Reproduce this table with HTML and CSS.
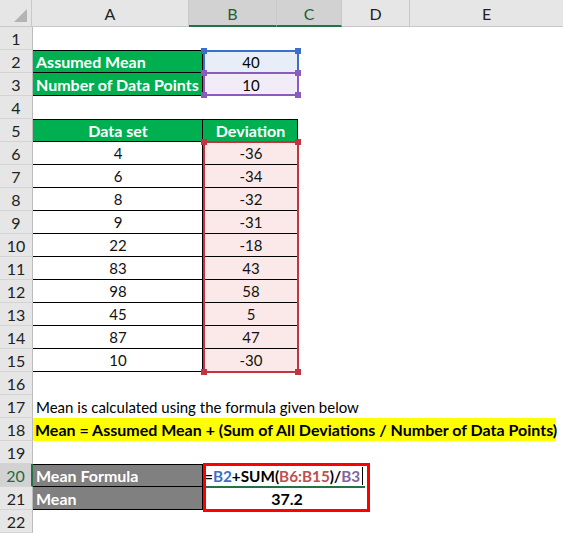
FILE: index.html
```html
<!DOCTYPE html>
<html>
<head>
<meta charset="utf-8">
<link rel="stylesheet" href="styles.css">
</head>
<body>
<div class="sheet">
  <div class="colhead">
    <div class="corner"><span class="tri"></span></div>
    <div class="ch cha">A</div>
    <div class="ch chb sel">B</div>
    <div class="ch chc sel">C</div>
    <div class="ch chd">D</div>
    <div class="ch che">E</div>
  </div>
  <div class="body">
    <div class="row"><div class="rn">1</div><div class="c"></div></div>
    <div class="row"><div class="rn">2</div><div class="c green bt bb br">Assumed Mean</div><div class="c ctr fill-blue">40</div></div>
    <div class="row"><div class="rn">3</div><div class="c green bb br">Number of Data Points</div><div class="c ctr fill-purple">10</div></div>
    <div class="row"><div class="rn">4</div><div class="c"></div></div>
    <div class="row"><div class="rn">5</div><div class="c green ctr bt bb br">Data set</div><div class="c green ctr bt bb br">Deviation</div></div>
    <div class="row"><div class="rn">6</div><div class="c ctr num bb br">4</div><div class="c ctr num fill-red bb">-36</div></div>
    <div class="row"><div class="rn">7</div><div class="c ctr num bb br">6</div><div class="c ctr num fill-red bb">-34</div></div>
    <div class="row"><div class="rn">8</div><div class="c ctr num bb br">8</div><div class="c ctr num fill-red bb">-32</div></div>
    <div class="row"><div class="rn">9</div><div class="c ctr num bb br">9</div><div class="c ctr num fill-red bb">-31</div></div>
    <div class="row"><div class="rn">10</div><div class="c ctr num bb br">22</div><div class="c ctr num fill-red bb">-18</div></div>
    <div class="row"><div class="rn">11</div><div class="c ctr num bb br">83</div><div class="c ctr num fill-red bb">43</div></div>
    <div class="row"><div class="rn">12</div><div class="c ctr num bb br">98</div><div class="c ctr num fill-red bb">58</div></div>
    <div class="row"><div class="rn">13</div><div class="c ctr num bb br">45</div><div class="c ctr num fill-red bb">5</div></div>
    <div class="row"><div class="rn">14</div><div class="c ctr num bb br">87</div><div class="c ctr num fill-red bb">47</div></div>
    <div class="row"><div class="rn">15</div><div class="c ctr num bb br">10</div><div class="c ctr num fill-red bb">-30</div></div>
    <div class="row"><div class="rn">16</div><div class="c"></div></div>
    <div class="row"><div class="rn">17</div><div class="c wide">Mean is calculated using the formula given below</div></div>
    <div class="row"><div class="rn">18</div><div class="c wide yellow">Mean = Assumed Mean + (Sum of All Deviations / Number of Data Points)</div></div>
    <div class="row"><div class="rn">19</div><div class="c"></div></div>
    <div class="row"><div class="rn rn-active">20</div><div class="c gray bt bb br">Mean Formula</div><div class="c formula span2"><span class="k">=</span><span class="rb">B2</span><span class="k">+SUM(</span><span class="rr">B6:B15</span><span class="k">)/</span><span class="rp">B3</span><span class="caret"></span></div></div>
    <div class="row"><div class="rn">21</div><div class="c gray bb br">Mean</div><div class="c ctr bold span2">37.2</div></div>
    <div class="row"><div class="rn">22</div><div class="c"></div></div>

    <div class="rng rng-blue"><i class="h tl"></i><i class="h tr"></i></div>
    <div class="rng rng-purple"><i class="h tl"></i><i class="h tr"></i><i class="h bl"></i><i class="h br2"></i></div>
    <div class="rng rng-red"><i class="h tl"></i><i class="h tr"></i><i class="h bl"></i><i class="h br2"></i></div>
    <div class="editline"><i class="eh"></i></div>
    <div class="fbox"></div>
  </div>
</div>
</body>
</html>
```

FILE: styles.css
```css
* { box-sizing: border-box; }
html, body { margin: 0; padding: 0; background: #fff; }
body { font-family: "Lato", "Liberation Sans", sans-serif; font-size: 15px; color: #000; }
.sheet { width: 563px; height: 534px; overflow: hidden; }

.colhead { display: flex; height: 27px; background: #e6e6e6; }
.corner { width: 32px; border-right: 1px solid #c8c8c8; border-bottom: 1px solid #c8c8c8; position: relative; }
.tri { position: absolute; right: 4px; bottom: 4px; width: 0; height: 0; border-left: 13px solid transparent; border-bottom: 13px solid #b4b4b4; }
.ch { display: flex; align-items: center; justify-content: center; border-right: 1px solid #c8c8c8; border-bottom: 1px solid #c8c8c8; font-size: 16px; color: #222; padding-top: 1px; }
.cha { width: 157px; }
.chb { width: 88px; }
.chc { width: 65px; }
.chd { width: 68px; }
.che { flex: 1; border-right: none; }
.ch.sel { background: #d2d2d2; border-bottom: 2px solid #217346; color: #1e5e38; }

.body { position: relative; }
.row { display: grid; grid-template-columns: 33px 170px 95px 72px 1fr; height: 23px; }
.rn { background: #e6e6e6; border-right: 1px solid #bcbcbc; border-bottom: 1px solid #d4d4d4; display: flex; align-items: center; justify-content: center; font-size: 16px; color: #222; }
.rn-active { background: #d2d2d2; color: #1e6b3c; border-right: 2px solid #217346; }
.c { display: flex; align-items: center; padding: 0 2px 0 3px; white-space: nowrap; }
.ctr { justify-content: center; }
.bold { font-weight: bold; font-size: 16px; }
.bt { border-top: 1px solid #000; }
.bb { border-bottom: 1px solid #000; }
.br { border-right: 1px solid #000; }
.green { background: #00b050; color: #fff; font-weight: bold; font-size: 16px; }
.gray { background: #808080; color: #fff; font-weight: bold; font-size: 16px; }
.yellow { background: #ffff00; font-weight: bold; font-size: 16px; padding-left: 2px; }
.wide { grid-column: 2 / 6; margin-right: 7px; }
.span2 { grid-column: 3 / 5; }
.fill-blue { background: #e8eef8; }
.fill-purple { background: #f1ecf7; }
.fill-red { background: #fbe8e8; }
.num { color: #111; }

.formula { font-weight: bold; font-size: 15.3px; padding-left: 1px; }
.formula .k { color: #000; }
.rb { color: #3a6fcd; }
.rr { color: #c0504d; }
.rp { color: #8064a2; }
.caret { display: inline-block; width: 1px; height: 18px; background: #000; margin-left: 2px; }

.rng { position: absolute; left: 203px; width: 96px; }
.rng-blue { top: 23px; height: 24px; border: 2px solid #3b6fc9; border-bottom: none; }
.rng-purple { top: 45px; height: 24px; border: 2px solid #8a5cbf; }
.rng-red { top: 114px; height: 232px; border: 2px solid #c3343f; }
.h { position: absolute; width: 6px; height: 6px; display: block; }
.rng-blue .h { background: #3b6fc9; }
.rng-purple .h { background: #8a5cbf; }
.rng-red .h { background: #c3343f; }
.h.tl { left: -4px; top: -4px; }
.h.tr { right: -4px; top: -4px; }
.h.bl { left: -4px; bottom: -4px; }
.h.br2 { right: -4px; bottom: -4px; }

.editline { position: absolute; left: 204px; top: 459px; width: 161px; height: 2px; background: #217346; }
.eh { position: absolute; right: -6px; top: -2px; width: 5px; height: 5px; background: #217346; border: 1px solid #fff; display: block; }
.fbox { position: absolute; left: 203px; top: 436px; width: 167px; height: 49px; border: 3px solid #ff0000; }
```
